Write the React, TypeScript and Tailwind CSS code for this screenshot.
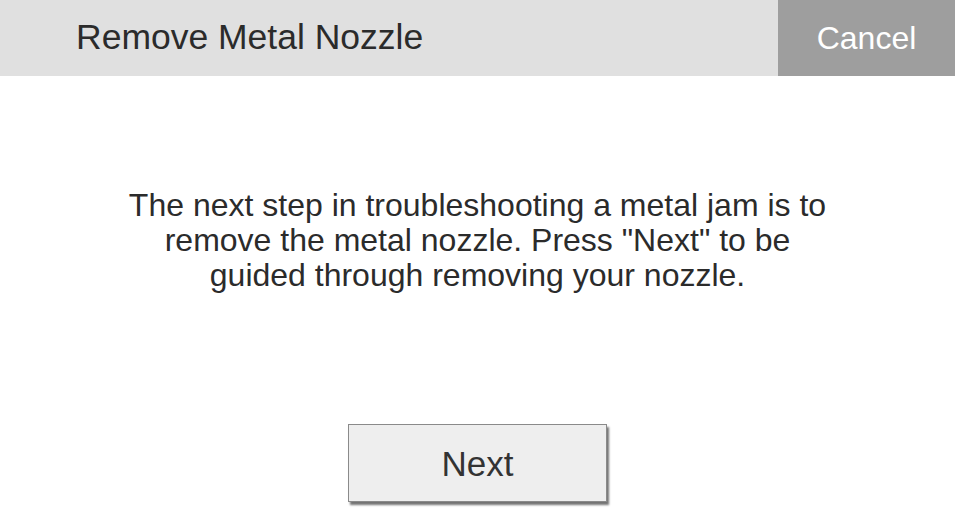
export default function App() {
  return (
    <div className="flex h-[521px] w-[955px] flex-col bg-white font-['Liberation_Sans',Arial,sans-serif] text-[#2b2b2b]">
      <header className="flex h-[76px] shrink-0 bg-[#e0e0e0]">
        <h1 className="flex flex-1 items-center pl-[76px] text-[35.5px] leading-none">
          Remove Metal Nozzle
        </h1>
        <button className="flex w-[177px] items-center justify-center bg-[#9e9e9e] text-[32px] leading-none text-white">
          Cancel
        </button>
      </header>
      <main className="flex flex-1 flex-col items-center">
        <p className="mt-[112px] w-[720px] text-center text-[32px] leading-[35px]">
          The next step in troubleshooting a metal jam is to remove the metal
          nozzle. Press "Next" to be guided through removing your nozzle.
        </p>
        <button className="mt-[131px] flex h-[78px] w-[259px] items-center justify-center border border-[#8a8a8a] bg-[#eeeeee] text-[35px] leading-none text-[#333] shadow-[2px_3px_2px_rgba(0,0,0,0.55)]">
          Next
        </button>
      </main>
    </div>
  );
}
